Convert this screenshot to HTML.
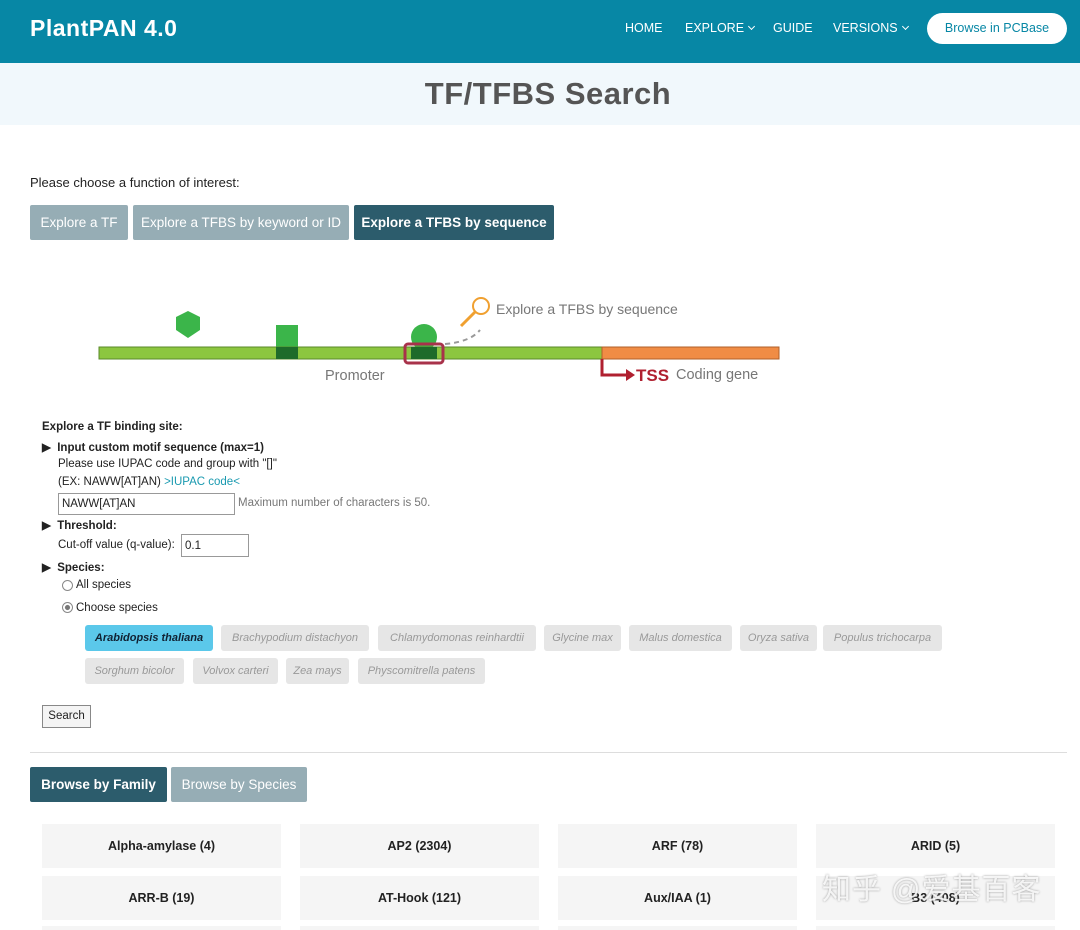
<!DOCTYPE html>
<html><head><meta charset="utf-8"><style>
*{margin:0;padding:0;box-sizing:border-box}
body{width:1080px;height:928px;overflow:hidden;background:#fff;font-family:"Liberation Sans",sans-serif;position:relative;color:#222}
.a{position:absolute}
.hdr{left:0;top:0;width:1080px;height:63px;background:#0787a5}
.nav{color:#fff;font-size:12.5px;top:21px;line-height:15px}
.chev{display:inline-block;width:5px;height:5px;border-right:1px solid #fff;border-bottom:1px solid #fff;transform:rotate(45deg);margin-left:5px;position:relative;top:-3px}
.band{left:0;top:63px;width:1080px;height:62px;background:#f1f8fc}
.btn{height:35px;line-height:35px;font-size:13.5px;color:#fff;text-align:center;border-radius:2px}
.chip{height:26px;line-height:26px;background:#e6e6e6;color:#999;font-style:italic;font-size:11px;text-align:center;border-radius:3px}
.f{font-size:11.5px}
.card{width:239px;height:44px;background:#f5f5f5;text-align:center;line-height:44px;font-size:12.5px;font-weight:bold;color:#222}
</style></head><body>
<div class="a hdr"></div>
<div class="a" style="left:30px;top:15px;color:#fff;font-size:23px;font-weight:bold;letter-spacing:0.5px">PlantPAN 4.0</div>
<div class="a nav" style="left:625px">HOME</div>
<div class="a nav" style="left:685px">EXPLORE<span class="chev"></span></div>
<div class="a nav" style="left:773px">GUIDE</div>
<div class="a nav" style="left:833px">VERSIONS<span class="chev"></span></div>
<div class="a" style="left:927px;top:13px;width:140px;height:31px;background:#fff;border-radius:16px;color:#0787a5;font-size:12.5px;text-align:center;line-height:31px">Browse in PCBase</div>
<div class="a band"></div>
<div class="a" style="left:0;top:76px;width:1096px;text-align:center;font-size:31px;font-weight:bold;color:#555;letter-spacing:0.5px">TF/TFBS Search</div>
<div class="a" style="left:30px;top:175px;font-size:13px">Please choose a function of interest:</div>
<div class="a btn" style="left:30px;top:205px;width:98px;background:#96adb5">Explore a TF</div>
<div class="a btn" style="left:133px;top:205px;width:216px;background:#96adb5">Explore a TFBS by keyword or ID</div>
<div class="a btn" style="left:354px;top:205px;width:200px;background:#2c5c6c;font-weight:bold">Explore a TFBS by sequence</div>
<svg class="a" style="left:0;top:280px" width="800" height="120">
<polygon points="188,31 200,37 200,50 188,58 176,50 176,37" fill="#3bb54a"/>
<rect x="276" y="45" width="22" height="22" fill="#3bb54a"/>
<circle cx="424" cy="57" r="13" fill="#3bb54a"/>
<rect x="99" y="67" width="503" height="12" fill="#8cc63f" stroke="#5a8a2a" stroke-width="1"/>
<rect x="602" y="67" width="177" height="12" fill="#f08c45" stroke="#b0602a" stroke-width="1"/>
<rect x="276" y="67" width="22" height="12" fill="#1e6b2a"/>
<rect x="411" y="67" width="26" height="12" fill="#1e6b2a"/>
<rect x="405" y="64" width="38" height="19" rx="3" fill="none" stroke="#a8324a" stroke-width="3"/>
<path d="M445,64 Q470,62 480,50" fill="none" stroke="#999" stroke-width="2" stroke-dasharray="5,4"/>
<circle cx="481" cy="26" r="8" fill="none" stroke="#f0a030" stroke-width="2"/>
<line x1="475" y1="32" x2="461" y2="46" stroke="#f0a030" stroke-width="3"/>
<text x="496" y="34" font-size="14" fill="#777" font-family="Liberation Sans">Explore a TFBS by sequence</text>
<text x="325" y="100" font-size="14.5" fill="#777" font-family="Liberation Sans">Promoter</text>
<path d="M602,79 L602,95 L628,95" fill="none" stroke="#b02030" stroke-width="3"/>
<polygon points="626,89 635,95 626,101" fill="#b02030"/>
<text x="636" y="101" font-size="17" font-weight="bold" fill="#b02030" font-family="Liberation Sans">TSS</text>
<text x="676" y="99" font-size="14.5" fill="#777" font-family="Liberation Sans">Coding gene</text>
</svg>
<div class="a f" style="left:42px;top:421px;font-weight:bold">Explore a TF binding site:</div>
<div class="a f" style="left:42px;top:440px;font-weight:bold">▶&nbsp; Input custom motif sequence (max=1)</div>
<div class="a f" style="left:58px;top:458px">Please use IUPAC code and group with "[]"</div>
<div class="a f" style="left:58px;top:476px">(EX: NAWW[AT]AN) <span style="color:#1a9ab0">&gt;IUPAC code&lt;</span></div>
<div class="a f" style="left:58px;top:493px;width:177px;height:22px;border:1px solid #999;padding:3px 3px;line-height:14px">NAWW[AT]AN</div>
<div class="a f" style="left:238px;top:497px;color:#777">Maximum number of characters is 50.</div>
<div class="a f" style="left:42px;top:518px;font-weight:bold">▶&nbsp; Threshold:</div>
<div class="a f" style="left:58px;top:539px">Cut-off value (q-value):</div>
<div class="a f" style="left:181px;top:534px;width:68px;height:23px;border:1px solid #999;padding:4px 3px;line-height:14px">0.1</div>
<div class="a f" style="left:42px;top:560px;font-weight:bold">▶&nbsp; Species:</div>
<div class="a" style="left:62px;top:580px;width:11px;height:11px;border:1px solid #888;border-radius:50%"></div>
<div class="a f" style="left:76px;top:579px">All species</div>
<div class="a" style="left:62px;top:602px;width:11px;height:11px;border:1px solid #888;border-radius:50%;background:radial-gradient(#777 35%,#fff 45%)"></div>
<div class="a f" style="left:76px;top:602px">Choose species</div>
<div class="a chip" style="left:85px;top:625px;width:128px;background:#5bc8ea;color:#123;font-weight:bold">Arabidopsis thaliana</div>
<div class="a chip" style="left:221px;top:625px;width:148px">Brachypodium distachyon</div>
<div class="a chip" style="left:378px;top:625px;width:158px">Chlamydomonas reinhardtii</div>
<div class="a chip" style="left:544px;top:625px;width:77px">Glycine max</div>
<div class="a chip" style="left:629px;top:625px;width:103px">Malus domestica</div>
<div class="a chip" style="left:740px;top:625px;width:77px">Oryza sativa</div>
<div class="a chip" style="left:823px;top:625px;width:119px">Populus trichocarpa</div>
<div class="a chip" style="left:85px;top:658px;width:99px">Sorghum bicolor</div>
<div class="a chip" style="left:193px;top:658px;width:85px">Volvox carteri</div>
<div class="a chip" style="left:286px;top:658px;width:63px">Zea mays</div>
<div class="a chip" style="left:358px;top:658px;width:127px">Physcomitrella patens</div>
<div class="a f" style="left:42px;top:705px;width:49px;height:23px;border:1px solid #888;background:#f4f4f4;text-align:center;line-height:21px">Search</div>
<div class="a" style="left:30px;top:752px;width:1037px;height:1px;background:#ddd"></div>
<div class="a btn" style="left:30px;top:767px;width:137px;background:#2c5c6c;font-weight:bold">Browse by Family</div>
<div class="a btn" style="left:171px;top:767px;width:136px;background:#96adb5">Browse by Species</div>
<div class="a card" style="left:42px;top:824px">Alpha-amylase (4)</div>
<div class="a card" style="left:300px;top:824px">AP2 (2304)</div>
<div class="a card" style="left:558px;top:824px">ARF (78)</div>
<div class="a card" style="left:816px;top:824px">ARID (5)</div>
<div class="a card" style="left:42px;top:876px">ARR-B (19)</div>
<div class="a card" style="left:300px;top:876px">AT-Hook (121)</div>
<div class="a card" style="left:558px;top:876px">Aux/IAA (1)</div>
<div class="a card" style="left:816px;top:876px">B3 (408)</div>
<div class="a card" style="left:42px;top:926px;height:4px"></div>
<div class="a card" style="left:300px;top:926px;height:4px"></div>
<div class="a card" style="left:558px;top:926px;height:4px"></div>
<div class="a card" style="left:816px;top:926px;height:4px"></div>
<div class="a" style="left:822px;top:866px;font-size:29px;letter-spacing:1px;color:rgba(255,255,255,0.85);text-shadow:0 0 2px #999;font-family:'Liberation Sans','Noto Sans CJK SC',sans-serif">知乎 @爱基百客</div>
</body></html>
